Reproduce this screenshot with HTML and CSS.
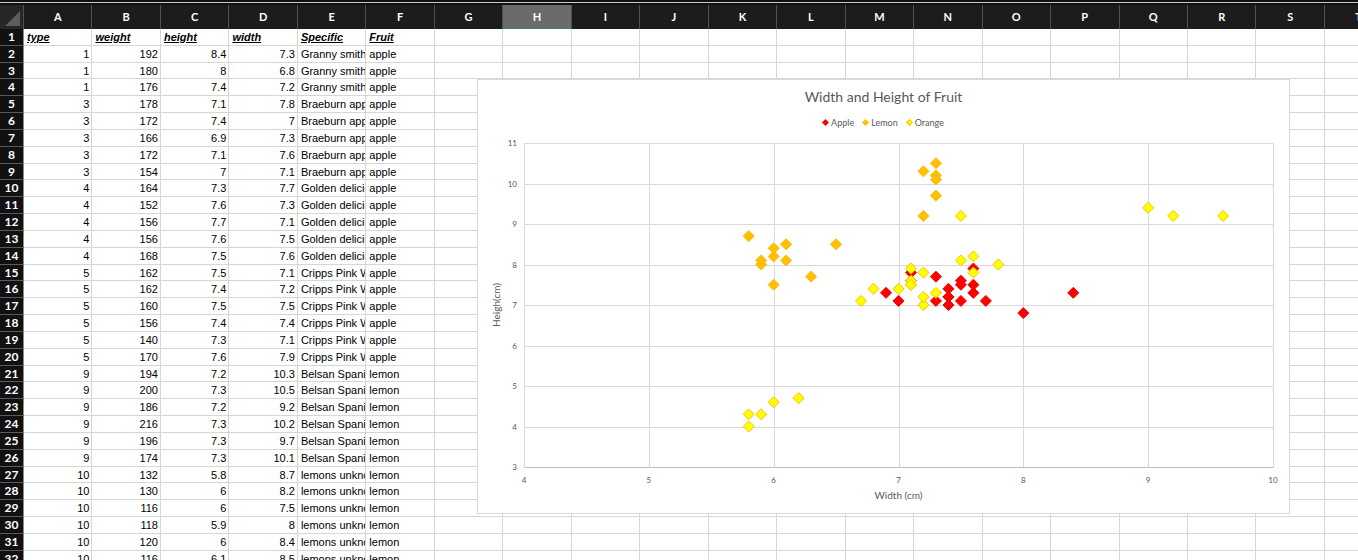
FILE: index.html
```html
<!DOCTYPE html>
<html>
    <head>
        <meta charset="utf-8">
        <title>fruit_data.xlsx</title>
        <link rel="stylesheet" href="styles.css">
    </head>
    <body>
        <div class="top-strip"></div>
        <div class="sheet" id="sheet"></div>

        <div class="chart">
            <div class="chart-title">Width and Height of Fruit</div>
            <div class="legend">
                <span class="legend-item"><i class="key apple"></i>Apple</span>
                <span class="legend-item"><i class="key lemon"></i>Lemon</span>
                <span class="legend-item"><i class="key orange"></i>Orange</span>
            </div>
            <svg class="plot" id="plot" width="811" height="383"></svg>
        </div>

        <script src="script.js"></script>
    </body>
</html>
```

FILE: styles.css
```css
body {
    margin: 0;
    overflow: hidden;
    background: #fff;
    font-family: "Liberation Sans", Arial, sans-serif;
    font-size: 11px;
    color: #000;
    position: relative;
}
.top-strip {
    height: 5px;
    background: linear-gradient(#111 0 2px, #c9c9c9 2px 3px, #111 3px);
}
.sheet {
    display: grid;
    grid-template-columns: 24px repeat(20, 68.47px);
    grid-template-rows: 24px;
    grid-auto-rows: 16.83px;
}
.cell {
    box-sizing: border-box;
    border-right: 1px solid #d6d6d6;
    border-bottom: 1px solid #d6d6d6;
    padding: 0 3px 0 3px;
    line-height: 16px;
    white-space: nowrap;
    overflow: hidden;
}
.num {
    text-align: right;
    padding-right: 2px;
}
.field {
    font-weight: bold;
    font-style: italic;
    text-decoration: underline;
}
.col-head, .row-head, .corner {
    box-sizing: border-box;
    color: #fff;
    font-family: Lato, "Open Sans", sans-serif;
    font-weight: bold;
    text-align: center;
}
.col-head {
    background: #1c1c1c;
    border-right: 1px solid #505050;
    font-size: 11px;
    line-height: 23px;
}
.col-head.active {
    background: #6b6b6b;
    border-bottom: 1px solid #2e8b57;
}
.corner {
    background: #262626;
    border-right: 1px solid #505050;
    display: flex;
    align-items: flex-end;
    justify-content: flex-end;
    padding: 0 3px 3px 0;
}
.corner::after {
    content: '';
    width: 15px;
    height: 15px;
    background: #5c5c5c;
    clip-path: polygon(100% 0, 100% 100%, 0 100%);
}
.row-head {
    background: #111;
    border-bottom: 1px solid #5a5a5a;
    border-right: 1px solid #8a8a8a;
    font-size: 12px;
    line-height: 16px;
}

/* chart object floating over the grid */
.chart {
    position: absolute;
    left: 477px;
    top: 79px;
    width: 813px;
    height: 435px;
    box-sizing: border-box;
    border: 1px solid #d9d9d9;
    background: #fff;
    font-family: Lato, "Open Sans", sans-serif;
    color: #595959;
}
.chart-title {
    height: 34px;
    line-height: 34px;
    text-align: center;
    font-size: 14px;
}
.legend {
    height: 16px;
    display: flex;
    justify-content: center;
    align-items: center;
    gap: 9px;
    font-size: 9px;
}
.legend-item {
    display: flex;
    align-items: center;
    gap: 3px;
}
.key {
    width: 5px;
    height: 5px;
    box-sizing: border-box;
    transform: rotate(45deg);
}
.key.apple { background: #ff0000; }
.key.lemon { background: #ffc000; }
.key.orange { background: #ffff00; border: 1px solid #ffc000; }
.plot {
    display: block;
}
.plot text {
    fill: #595959;
    font-family: Lato, "Open Sans", sans-serif;
}
.plot .tick { font-size: 8px; }
.plot .axis-title { font-size: 10px; }
```

FILE: script.js
```js
// sheet rows 2..32: type, weight, height, width, specific, fruit
var rows = [
    [1, 192, 8.4, 7.3, 'Granny smith', 'apple'],
    [1, 180, 8, 6.8, 'Granny smith', 'apple'],
    [1, 176, 7.4, 7.2, 'Granny smith', 'apple'],
    [3, 178, 7.1, 7.8, 'Braeburn apple', 'apple'],
    [3, 172, 7.4, 7, 'Braeburn apple', 'apple'],
    [3, 166, 6.9, 7.3, 'Braeburn apple', 'apple'],
    [3, 172, 7.1, 7.6, 'Braeburn apple', 'apple'],
    [3, 154, 7, 7.1, 'Braeburn apple', 'apple'],
    [4, 164, 7.3, 7.7, 'Golden delicious', 'apple'],
    [4, 152, 7.6, 7.3, 'Golden delicious', 'apple'],
    [4, 156, 7.7, 7.1, 'Golden delicious', 'apple'],
    [4, 156, 7.6, 7.5, 'Golden delicious', 'apple'],
    [4, 168, 7.5, 7.6, 'Golden delicious', 'apple'],
    [5, 162, 7.5, 7.1, 'Cripps Pink WA', 'apple'],
    [5, 162, 7.4, 7.2, 'Cripps Pink WA', 'apple'],
    [5, 160, 7.5, 7.5, 'Cripps Pink WA', 'apple'],
    [5, 156, 7.4, 7.4, 'Cripps Pink WA', 'apple'],
    [5, 140, 7.3, 7.1, 'Cripps Pink WA', 'apple'],
    [5, 170, 7.6, 7.9, 'Cripps Pink WA', 'apple'],
    [9, 194, 7.2, 10.3, 'Belsan Spanish', 'lemon'],
    [9, 200, 7.3, 10.5, 'Belsan Spanish', 'lemon'],
    [9, 186, 7.2, 9.2, 'Belsan Spanish', 'lemon'],
    [9, 216, 7.3, 10.2, 'Belsan Spanish', 'lemon'],
    [9, 196, 7.3, 9.7, 'Belsan Spanish', 'lemon'],
    [9, 174, 7.3, 10.1, 'Belsan Spanish', 'lemon'],
    [10, 132, 5.8, 8.7, 'lemons unknown', 'lemon'],
    [10, 130, 6, 8.2, 'lemons unknown', 'lemon'],
    [10, 116, 6, 7.5, 'lemons unknown', 'lemon'],
    [10, 118, 5.9, 8, 'lemons unknown', 'lemon'],
    [10, 120, 6, 8.4, 'lemons unknown', 'lemon'],
    [10, 116, 6.1, 8.5, 'lemons unknown', 'lemon']
];
var fields = ['type', 'weight', 'height', 'width', 'Specific', 'Fruit'];
var letters = 'ABCDEFGHIJKLMNOPQRST'.split('');

var sheet = document.getElementById('sheet');

function div(cls, text) {
    var d = document.createElement('div');
    d.className = cls;
    if (text !== undefined) d.textContent = text;
    sheet.appendChild(d);
    return d;
}

div('corner');
letters.forEach(function (l) {
    div(l === 'H' ? 'col-head active' : 'col-head', l);
});

for (var r = 1; r <= 33; r++) {
    div('row-head', r);
    for (var c = 0; c < letters.length; c++) {
        if (r === 1 && c < fields.length) {
            div('cell field', fields[c]);
        } else if (r >= 2 && rows[r - 2] && c < 6) {
            var v = rows[r - 2][c];
            div(typeof v === 'number' ? 'cell num' : 'cell', v);
        } else {
            div('cell');
        }
    }
}

// scatter chart: x = width (cm), y = height (cm)
var apple = [[8.4,7.3],[8.0,6.8],[7.4,7.2],[7.1,7.8],[7.4,7.0],[6.9,7.3],[7.1,7.6],[7.0,7.1],[7.3,7.7],[7.6,7.3],
    [7.7,7.1],[7.6,7.5],[7.5,7.6],[7.5,7.1],[7.4,7.2],[7.5,7.5],[7.4,7.4],[7.3,7.1],[7.6,7.9]];
var lemon = [[7.2,10.3],[7.3,10.5],[7.2,9.2],[7.3,10.2],[7.3,9.7],[7.3,10.1],[5.8,8.7],[6.0,8.2],
    [6.0,7.5],[5.9,8.0],[6.0,8.4],[6.1,8.5],[6.3,7.7],[5.9,8.1],[6.5,8.5],[6.1,8.1]];
var orange = [[6.2,4.7],[6.0,4.6],[5.8,4.3],[5.9,4.3],[5.8,4.0],[9.0,9.4],[9.2,9.2],[9.6,9.2],[7.5,9.2],
    [6.7,7.1],[7.0,7.4],[7.1,7.5],[7.8,8.0],[7.2,7.0],[7.5,8.1],[7.6,7.8],[7.1,7.9],[7.1,7.6],[7.3,7.3],
    [7.2,7.8],[6.8,7.4],[7.1,7.5],[7.6,8.2],[7.2,7.2]];

var svgNS = 'http://www.w3.org/2000/svg';
var plot = document.getElementById('plot');
var X0 = 46, X1 = 795, Y0 = 337, Y1 = 13;

function px(v) { return X0 + (v - 4) / 6 * (X1 - X0); }
function py(v) { return Y0 - (v - 3) / 8 * (Y0 - Y1); }

function el(name, attrs, text) {
    var e = document.createElementNS(svgNS, name);
    for (var k in attrs) e.setAttribute(k, attrs[k]);
    if (text !== undefined) e.textContent = text;
    plot.appendChild(e);
    return e;
}

for (var x = 4; x <= 10; x++) {
    var gx = Math.round(px(x)) + 0.5;
    el('line', { x1: gx, x2: gx, y1: Y1 + 0.5, y2: Y0 + 0.5, stroke: '#d9d9d9' });
    el('text', { x: px(x), y: Y0 + 16, 'text-anchor': 'middle', 'class': 'tick' }, x);
}
for (var y = 3; y <= 11; y++) {
    var gy = Math.round(py(y)) + 0.5;
    el('line', { x1: X0 + 0.5, x2: X1 + 0.5, y1: gy, y2: gy, stroke: y === 3 ? '#bfbfbf' : '#d9d9d9' });
    el('text', { x: 39, y: py(y) + 3, 'text-anchor': 'end', 'class': 'tick' }, y);
}

el('text', { x: px(7), y: Y0 + 32, 'text-anchor': 'middle', 'class': 'axis-title' }, 'Width (cm)');
el('text', { x: 22, y: 175, 'text-anchor': 'middle', 'class': 'axis-title',
    transform: 'rotate(-90 22 175)' }, 'Heigh(cm)');

function series(points, fill, stroke) {
    points.forEach(function (p) {
        var cx = px(p[0]), cy = py(p[1]), s = 5.5;
        el('polygon', {
            points: [cx, cy - s, cx + s, cy, cx, cy + s, cx - s, cy].join(' '),
            fill: fill, stroke: stroke, 'stroke-width': 1
        });
    });
}

series(apple, '#ff0000', '#f00000');
series(lemon, '#ffc000', '#ffb800');
series(orange, '#ffff00', '#ffc000');
```
